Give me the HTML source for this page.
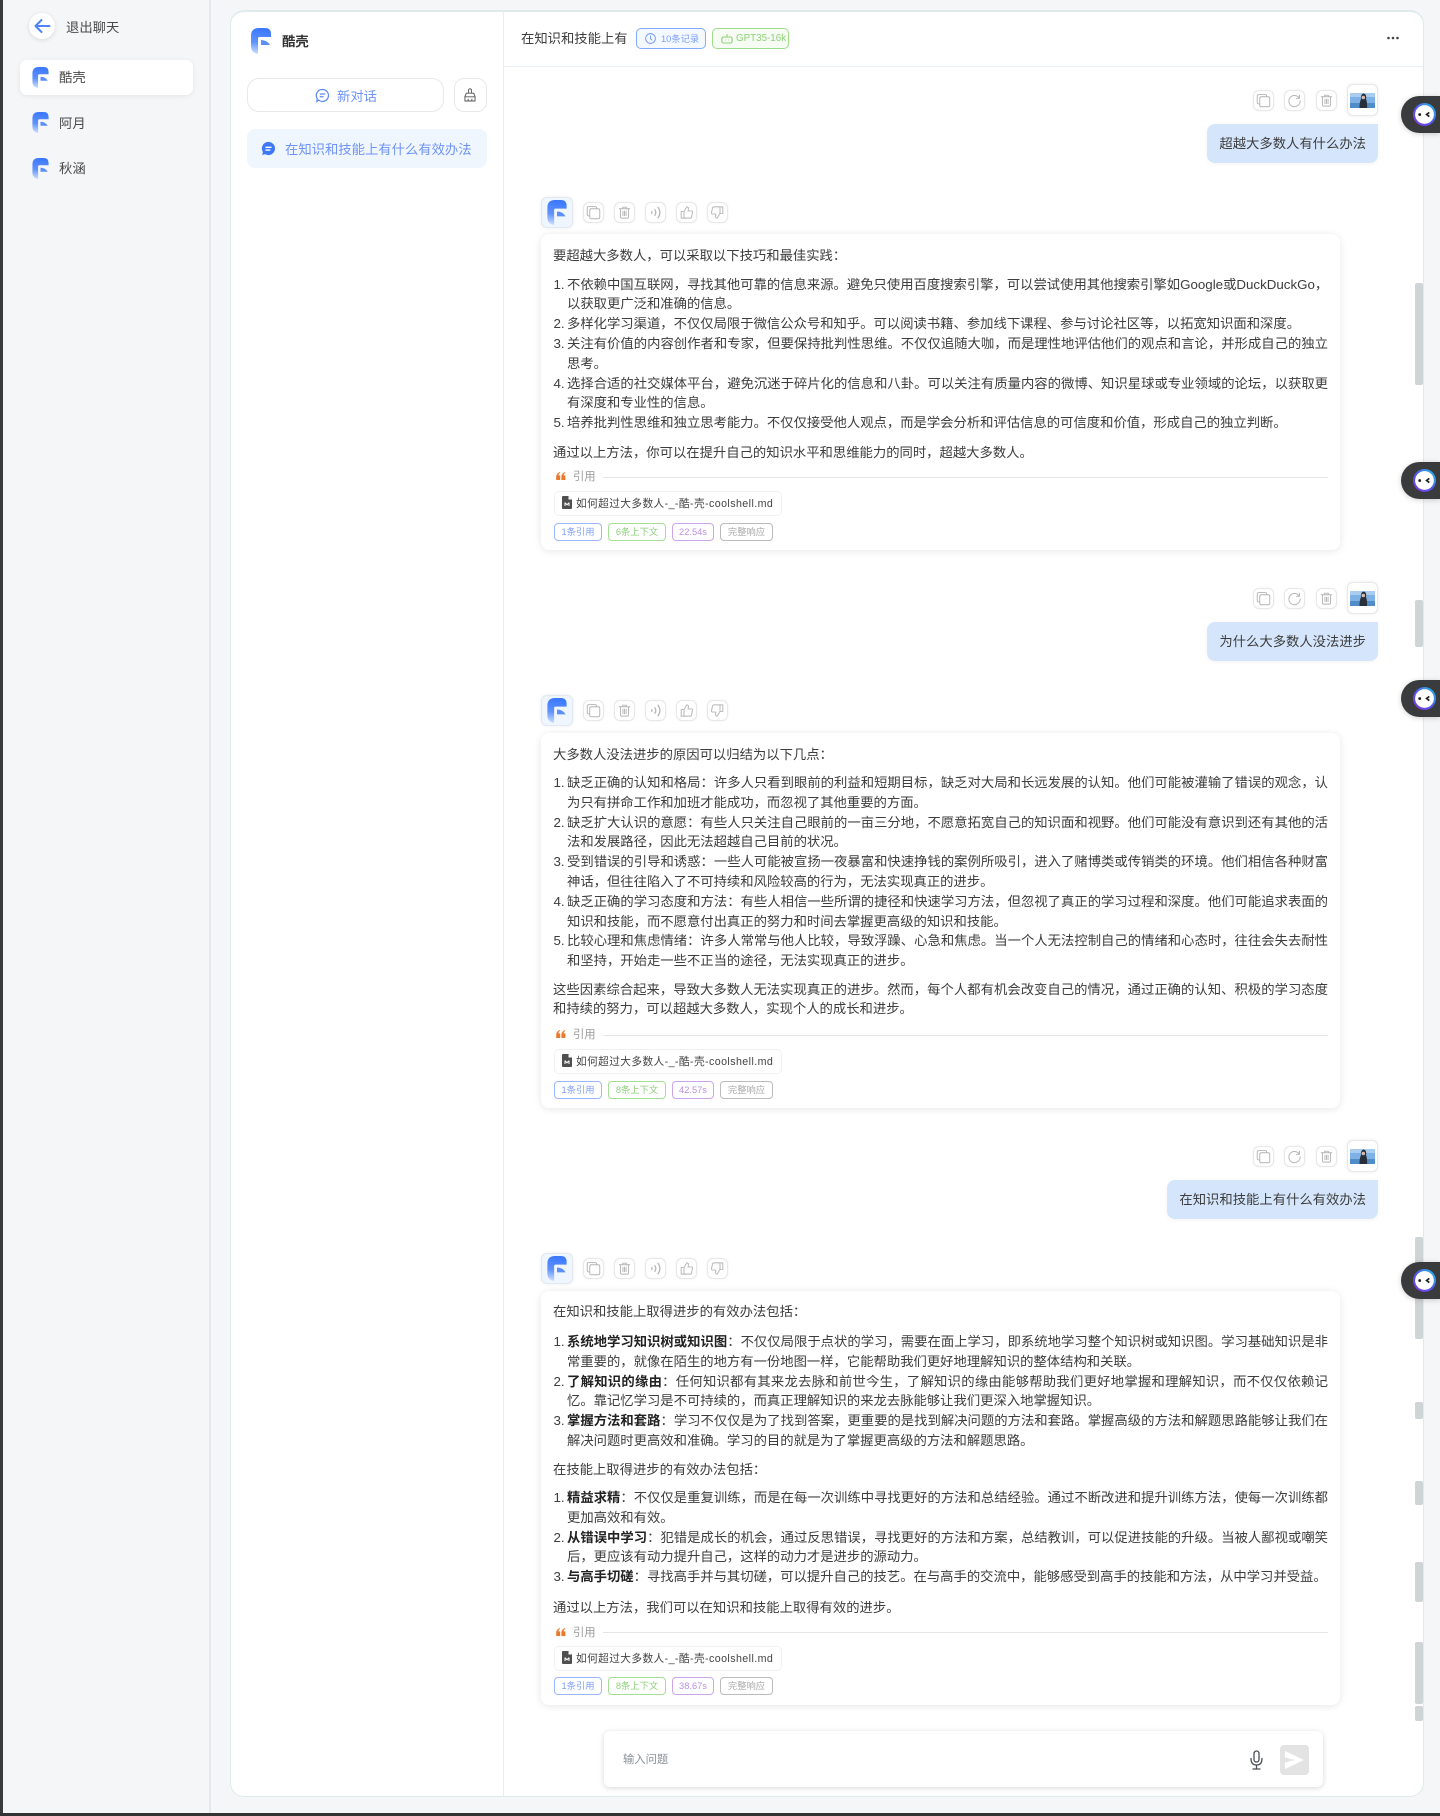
<!DOCTYPE html>
<html lang="zh-CN">
<head>
<meta charset="utf-8">
<title>酷壳</title>
<style>
*{box-sizing:border-box}
html,body{margin:0;padding:0}
body{width:1440px;height:1816px;position:relative;overflow:hidden;background:#f4f6f8;font-family:"Liberation Sans","Noto Sans CJK SC",sans-serif;color:#3c3c3c;font-size:13.33px}
.a{position:absolute}
.t{position:absolute;height:20px;line-height:20px;margin-top:1px;font-size:13.33px;white-space:nowrap;color:#3d3d3d;filter:blur(.25px)}
.p{left:553px;width:775px}
.n{left:567px;width:761px}
.j{text-align-last:justify}
.n i{position:absolute;left:-13.5px;font-style:normal}
b{font-weight:700;color:#222}
.card{position:absolute;left:541px;width:799px;background:#fff;border-radius:8px;box-shadow:0 1px 8px rgba(0,0,0,.10)}
.ib{position:absolute;top:5px;width:21px;height:21px;background:#fff;border:1px solid #e8e8e8;border-radius:6px;box-shadow:0 0 2px rgba(0,0,0,.06);display:flex;align-items:center;justify-content:center}
.ib svg{width:15px;height:15px;fill:none;stroke:#b4b4b4;stroke-width:1.5;stroke-linecap:round;stroke-linejoin:round}
.row{position:absolute;left:0;width:1440px;height:32px}
.bot{position:absolute;left:541px;top:0;width:32px;height:31px;background:#f0f6ff;border:1px solid #e2e9f3;border-radius:6px;box-shadow:0 0 3px rgba(0,0,0,.08);display:flex;align-items:center;justify-content:center}
.ava{position:absolute;left:1347px;top:0;width:31px;height:32px;background:#fff;border:1px solid #e8e8e8;border-radius:6px;box-shadow:0 0 3px rgba(0,0,0,.08)}
.bub{position:absolute;right:62px;height:39px;line-height:40px;padding:0 12px;background:#d5e6fc;border-radius:8px 0 8px 8px;font-size:13.33px;color:#3d3d3d;white-space:nowrap;box-shadow:0 1px 4px rgba(0,0,0,.05)}
.qt{position:absolute;left:573px;font-size:11.3px;line-height:14px;margin-top:1px;color:#999}
.ql{position:absolute;left:603px;width:725px;height:1px;background:#e3e5e8}
.qm{position:absolute;left:556px;width:10px;height:8px;margin-top:1px}
.chip{position:absolute;left:554px;width:228px;height:25px;background:#fff;border:1px solid #f1f1f3;border-radius:5px;font-size:10.67px;letter-spacing:.42px;line-height:25px;padding-left:21px;color:#444;white-space:nowrap;filter:blur(.2px)}
.chip svg{position:absolute;left:7px;top:4px;width:10px;height:13px}
.tag{position:absolute;height:18px;line-height:16px;border:1px solid;border-radius:4px;font-size:9.3px;text-align:center;white-space:nowrap}
.tb{color:#7f9ffa;border-color:#9ab7ff}
.tg{color:#8fd07a;border-color:#a5df93}
.tp{color:#b88fe0;border-color:#cca4ea}
.tn{color:#aaa;border-color:#bbb}
.pill{position:absolute;left:1401px;width:39px;height:37px;background:#3a3b3d;border-radius:18.5px 0 0 18.5px;box-shadow:0 1px 6px rgba(0,0,0,.18);z-index:5}
.pill svg{position:absolute;left:12px;top:7px;width:23px;height:23px}
.sb{position:absolute;left:1415px;width:8px;background:#cfd4d7;border-radius:2px;z-index:3}
.side{position:absolute;left:59px;height:20px;line-height:20px;margin-top:1px;font-size:13.33px;color:#4a4a4a}
</style>
</head>
<body>
<svg width="0" height="0" style="position:absolute">
<defs>
<linearGradient id="lg" x1="0.3" y1="0" x2="0.2" y2="1"><stop offset="0" stop-color="#3b78ff"/><stop offset=".55" stop-color="#5f93fb"/><stop offset="1" stop-color="#cfe0ff"/></linearGradient>
<linearGradient id="rg" x1="0" y1="1" x2="1" y2="0"><stop offset="0" stop-color="#8a2fd8"/><stop offset=".5" stop-color="#4d5cf0"/><stop offset="1" stop-color="#20c7dc"/></linearGradient>
<symbol id="logo" viewBox="0 0 20 26">
<path fill="url(#lg)" d="M8 0H14Q20 0 20 6V9H8.5Q7 9 7 10.5V26Q0 25 0 18V8Q0 0 8 0Z"/>
<path fill="#5c8ffa" d="M10 12Q16 12 19 17H10Z"/>
</symbol>
<symbol id="copy" viewBox="0 0 24 24"><path d="M17 6V5A2.500 2.500 0 0 0 14.500 2.500H4.500A2.500 2.500 0 0 0 2 5V15A2.500 2.500 0 0 0 4.500 17.500H6"/><rect x="6" y="6" width="16" height="16" rx="2.500"/></symbol>
<symbol id="trash" viewBox="0 0 24 24"><path d="M3.500 6H20.500M9 6V3.500H15V6M5.500 6V19A2 2 0 0 0 7.500 21H16.500A2 2 0 0 0 18.500 19V6M9.500 10V17M12 10V17M14.500 10V17"/></symbol>
<symbol id="sound" viewBox="0 0 24 24"><path d="M6 10.500Q7 12 6 13.500M11 7.500Q14 12 11 16.500M16 3.500Q22 12 16 20.500" stroke-width="2"/></symbol>
<symbol id="up" viewBox="0 0 24 24"><path d="M8 10.500L12.500 3Q15.500 3 15 6.500L14.500 9.500H20Q22 9.500 21.500 12L20 19.500Q19.500 21 18 21H8ZM8 10.500H3.500V21H8"/></symbol>
<symbol id="down" viewBox="0 0 24 24"><path d="M16 13.500L11.500 21Q8.500 21 9 17.500L9.500 14.500H4Q2 14.500 2.500 12L4 4.500Q4.500 3 6 3H16ZM16 13.500H20.500V3H16"/></symbol>
<symbol id="redo" viewBox="0 0 24 24"><path d="M19.500 8A9 9 0 1 0 21 12.500M20 3.500V8.500H15"/></symbol>
<symbol id="face" viewBox="0 0 24 24">
<circle cx="12" cy="12" r="12" fill="url(#rg)"/><circle cx="12" cy="12" r="9.800" fill="#fff"/>
<circle cx="7" cy="12" r="1.500" fill="#222"/><path d="M17 9.800L14.200 12L17 14.200" fill="none" stroke="#222" stroke-width="1.800"/>
</symbol>
<symbol id="photo" viewBox="0 0 25 15">
<rect width="25" height="15" fill="#7fb2e4"/><rect x="0" y="0" width="25" height="4" fill="#a9cdee"/><rect y="10" width="25" height="5" fill="#4f8cc8"/>
<path d="M9.500 15Q9.500 9 11 6Q10.500 1 13.500 0.500Q17 1 16 6Q17.500 10 17 15Z" fill="#2a2e38"/><circle cx="13.300" cy="4.500" r="1.800" fill="#d8b8a8"/>
</symbol>
<symbol id="file" viewBox="0 0 10 13"><path fill="#4f4f4f" d="M1 0H6.500L10 3.500V12A1 1 0 0 1 9 13H1A1 1 0 0 1 0 12V1A1 1 0 0 1 1 0Z"/><path fill="#fff" d="M6.500 0V3.500H10Z"/><path fill="#fff" d="M2.500 10V6.500H3.500L5 8L6.500 6.500H7.500V10H6.500V8L5 9.500L3.500 8V10Z"/></symbol>
<symbol id="quote" viewBox="0 0 12 10"><path fill="#e97a2b" d="M0 10V6Q0 2 4.500 0L5 1Q3 2 2.800 4.200H5V10ZM6.500 10V6Q6.500 2 11 0L11.500 1Q9.500 2 9.300 4.200H11.500V10Z"/></symbol>
</defs>
</svg>

<!-- screen edges -->
<div class="a" style="left:0;top:0;width:3px;height:1816px;background:#3a3a3a"></div>
<div class="a" style="left:0;top:1813px;width:1440px;height:3px;background:#333"></div>
<div class="a" style="left:209px;top:0;width:2px;height:1813px;background:#e6e9ec"></div>

<!-- sidebar -->
<div class="a" style="left:29px;top:13px;width:26px;height:26px;border-radius:50%;background:#fff;box-shadow:0 1px 5px rgba(0,0,0,.12)"></div>
<svg class="a" style="left:34px;top:18px;width:17px;height:16px" viewBox="0 0 17 16" fill="none" stroke="#4e83fd" stroke-width="2" stroke-linecap="round" stroke-linejoin="round"><path d="M1.500 8H15.500M7.500 2L1.500 8L7.500 14"/></svg>
<div class="side" style="left:66px;top:17px">退出聊天</div>
<div class="a" style="left:20px;top:60px;width:173px;height:35px;background:#fff;border-radius:7px;box-shadow:0 1px 6px rgba(0,0,0,.07)"></div>
<svg class="a" style="left:32px;top:67px;width:17px;height:21px"><use href="#logo"/></svg>
<div class="side" style="top:67px">酷壳</div>
<svg class="a" style="left:32px;top:112px;width:17px;height:21px"><use href="#logo"/></svg>
<div class="side" style="top:113px">阿月</div>
<svg class="a" style="left:32px;top:158px;width:17px;height:21px"><use href="#logo"/></svg>
<div class="side" style="top:158px">秋涵</div>

<!-- main card -->
<div class="a" style="left:230px;top:10px;width:1194px;height:1787px;background:#fff;border:1px solid #dfeaed;border-top-width:2px;border-radius:14px"></div>
<div class="a" style="left:503px;top:11px;width:1px;height:1785px;background:#e9eef3"></div>
<div class="a" style="left:504px;top:66px;width:919px;height:1px;background:#e9eff7"></div>

<!-- left panel -->
<svg class="a" style="left:251px;top:28px;width:20px;height:26px"><use href="#logo"/></svg>
<div class="t" style="left:282px;top:31px;font-weight:700;color:#333">酷壳</div>
<div class="a" style="left:247px;top:78px;width:197px;height:34px;border:1px solid #e9e9ec;border-radius:12px"></div>
<svg class="a" style="left:315px;top:88px;width:15px;height:15px" viewBox="0 0 24 24" fill="none" stroke="#5d8af7" stroke-width="2" stroke-linecap="round"><path d="M12 2.500A9.500 9.500 0 1 1 6 19.300L3 21.500L3.500 17A9.500 9.500 0 0 1 12 2.500Z"/><path d="M8.500 9.500H15.500M8.500 14H13"/></svg>
<div class="t" style="left:337px;top:86px;color:#6f93f7">新对话</div>
<div class="a" style="left:454px;top:78px;width:33px;height:34px;border:1px solid #e9e9ec;border-radius:10px"></div>
<svg class="a" style="left:464px;top:88px;width:12px;height:14px" viewBox="0 0 13 15" fill="none" stroke="#555" stroke-width="1" stroke-linejoin="round"><path d="M5 5.500V1.500Q6.500 0 8 1.500V5.500M2.500 5.500H10.500L12 9V14H1V9ZM1 9.500H12M4.500 14V11.500M8.500 14V11.500"/></svg>
<div class="a" style="left:247px;top:129px;width:240px;height:39px;background:#f0f6fe;border-radius:8px"></div>
<svg class="a" style="left:261px;top:141px;width:15px;height:15px" viewBox="0 0 24 24"><path fill="#3f78f6" d="M12 1.500A10.500 10.500 0 1 1 6.500 21L2 22.500L3 17.500A10.500 10.500 0 0 1 12 1.500Z"/><path stroke="#fff" stroke-width="2.200" stroke-linecap="round" d="M8 10H16M8 14.500H14"/></svg>
<div class="t" style="left:285px;top:139px;color:#6f93f7">在知识和技能上有什么有效办法</div>

<!-- header -->
<div class="t" style="left:521px;top:28px">在知识和技能上有</div>
<div class="a" style="left:636px;top:28px;width:70px;height:21px;background:#f4f8ff;border:1px solid #84a9fd;border-radius:5px"></div>
<svg class="a" style="left:645px;top:33px;width:11px;height:11px" viewBox="0 0 12 12" fill="none" stroke="#6f97f8" stroke-width="1"><circle cx="6" cy="6" r="5.300"/><path d="M6 2.800V6.300L8 8"/></svg>
<div class="t" style="left:661px;top:28px;font-size:9.300px;color:#7f9ffa">10条记录</div>
<div class="a" style="left:712px;top:28px;width:77px;height:21px;background:#f6fcf3;border:1px solid #9edc89;border-radius:5px"></div>
<svg class="a" style="left:721px;top:33px;width:12px;height:11px" viewBox="0 0 12 11" fill="none" stroke="#8fd07a" stroke-width="1"><rect x="1" y="4" width="10" height="6" rx="1.500"/><path d="M6 4V1M0 7H1M11 7H12M4 7H4.500M7.500 7H8"/></svg>
<div class="t" style="left:736px;top:28px;font-size:9.800px;color:#8fd07a">GPT35-16k</div>
<svg class="a" style="left:1387px;top:36px;width:12px;height:4px" viewBox="0 0 12 4" fill="#444"><circle cx="1.500" cy="2" r="1.300"/><circle cx="6" cy="2" r="1.300"/><circle cx="10.500" cy="2" r="1.300"/></svg>

<!-- user 1 -->
<div class="row" style="top:84px">
<div class="ib" style="left:1253px;top:6px"><svg><use href="#copy"/></svg></div>
<div class="ib" style="left:1284px;top:6px"><svg><use href="#redo"/></svg></div>
<div class="ib" style="left:1316px;top:6px"><svg><use href="#trash"/></svg></div>
<div class="ava"><svg style="position:absolute;left:2px;top:8px;width:25px;height:15px"><use href="#photo"/></svg></div>
</div>
<div class="bub" style="top:124px">超越大多数人有什么办法</div>

<!-- bot 1 -->
<div class="row" style="top:197px">
<div class="bot"><svg width="20" height="25"><use href="#logo"/></svg></div>
<div class="ib" style="left:583px"><svg><use href="#copy"/></svg></div>
<div class="ib" style="left:614px"><svg><use href="#trash"/></svg></div>
<div class="ib" style="left:645px"><svg><use href="#sound"/></svg></div>
<div class="ib" style="left:676px"><svg><use href="#up"/></svg></div>
<div class="ib" style="left:707px"><svg><use href="#down"/></svg></div>
</div>
<div class="card" style="top:234px;height:316px"></div>
<div class="t p" style="top:244.500px">要超越大多数人，可以采取以下技巧和最佳实践：</div>
<div class="t n j" style="top:273.500px"><i>1.</i>不依赖中国互联网，寻找其他可靠的信息来源。避免只使用百度搜索引擎，可以尝试使用其他搜索引擎如Google或DuckDuckGo，</div>
<div class="t n" style="top:293.300px">以获取更广泛和准确的信息。</div>
<div class="t n" style="top:313.100px"><i>2.</i>多样化学习渠道，不仅仅局限于微信公众号和知乎。可以阅读书籍、参加线下课程、参与讨论社区等，以拓宽知识面和深度。</div>
<div class="t n j" style="top:332.900px"><i>3.</i>关注有价值的内容创作者和专家，但要保持批判性思维。不仅仅追随大咖，而是理性地评估他们的观点和言论，并形成自己的独立</div>
<div class="t n" style="top:352.700px">思考。</div>
<div class="t n j" style="top:372.500px"><i>4.</i>选择合适的社交媒体平台，避免沉迷于碎片化的信息和八卦。可以关注有质量内容的微博、知识星球或专业领域的论坛，以获取更</div>
<div class="t n" style="top:392.300px">有深度和专业性的信息。</div>
<div class="t n" style="top:412.100px"><i>5.</i>培养批判性思维和独立思考能力。不仅仅接受他人观点，而是学会分析和评估信息的可信度和价值，形成自己的独立判断。</div>
<div class="t p" style="top:441.500px">通过以上方法，你可以在提升自己的知识水平和思维能力的同时，超越大多数人。</div>
<svg class="qm" style="top:471px"><use href="#quote"/></svg>
<div class="qt" style="top:469px">引用</div>
<div class="ql" style="top:477px"></div>
<div class="chip" style="top:491px"><svg><use href="#file"/></svg>如何超过大多数人-_-酷-壳-coolshell.md</div>
<div class="tag tb" style="left:554px;top:523px;width:48px">1条引用</div>
<div class="tag tg" style="left:608px;top:523px;width:58px">6条上下文</div>
<div class="tag tp" style="left:672px;top:523px;width:42px">22.54s</div>
<div class="tag tn" style="left:720px;top:523px;width:53px">完整响应</div>

<!-- user 2 -->
<div class="row" style="top:582px">
<div class="ib" style="left:1253px;top:6px"><svg><use href="#copy"/></svg></div>
<div class="ib" style="left:1284px;top:6px"><svg><use href="#redo"/></svg></div>
<div class="ib" style="left:1316px;top:6px"><svg><use href="#trash"/></svg></div>
<div class="ava"><svg style="position:absolute;left:2px;top:8px;width:25px;height:15px"><use href="#photo"/></svg></div>
</div>
<div class="bub" style="top:622px">为什么大多数人没法进步</div>

<!-- bot 2 -->
<div class="row" style="top:695px">
<div class="bot"><svg width="20" height="25"><use href="#logo"/></svg></div>
<div class="ib" style="left:583px"><svg><use href="#copy"/></svg></div>
<div class="ib" style="left:614px"><svg><use href="#trash"/></svg></div>
<div class="ib" style="left:645px"><svg><use href="#sound"/></svg></div>
<div class="ib" style="left:676px"><svg><use href="#up"/></svg></div>
<div class="ib" style="left:707px"><svg><use href="#down"/></svg></div>
</div>
<div class="card" style="top:733px;height:375px"></div>
<div class="t p" style="top:744px">大多数人没法进步的原因可以归结为以下几点：</div>
<div class="t n j" style="top:772px"><i>1.</i>缺乏正确的认知和格局：许多人只看到眼前的利益和短期目标，缺乏对大局和长远发展的认知。他们可能被灌输了错误的观念，认</div>
<div class="t n" style="top:791.800px">为只有拼命工作和加班才能成功，而忽视了其他重要的方面。</div>
<div class="t n j" style="top:811.600px"><i>2.</i>缺乏扩大认识的意愿：有些人只关注自己眼前的一亩三分地，不愿意拓宽自己的知识面和视野。他们可能没有意识到还有其他的活</div>
<div class="t n" style="top:831.400px">法和发展路径，因此无法超越自己目前的状况。</div>
<div class="t n j" style="top:851.200px"><i>3.</i>受到错误的引导和诱惑：一些人可能被宣扬一夜暴富和快速挣钱的案例所吸引，进入了赌博类或传销类的环境。他们相信各种财富</div>
<div class="t n" style="top:871px">神话，但往往陷入了不可持续和风险较高的行为，无法实现真正的进步。</div>
<div class="t n j" style="top:890.800px"><i>4.</i>缺乏正确的学习态度和方法：有些人相信一些所谓的捷径和快速学习方法，但忽视了真正的学习过程和深度。他们可能追求表面的</div>
<div class="t n" style="top:910.600px">知识和技能，而不愿意付出真正的努力和时间去掌握更高级的知识和技能。</div>
<div class="t n j" style="top:930.400px"><i>5.</i>比较心理和焦虑情绪：许多人常常与他人比较，导致浮躁、心急和焦虑。当一个人无法控制自己的情绪和心态时，往往会失去耐性</div>
<div class="t n" style="top:950.200px">和坚持，开始走一些不正当的途径，无法实现真正的进步。</div>
<div class="t p j" style="top:978.500px">这些因素综合起来，导致大多数人无法实现真正的进步。然而，每个人都有机会改变自己的情况，通过正确的认知、积极的学习态度</div>
<div class="t p" style="top:998.300px">和持续的努力，可以超越大多数人，实现个人的成长和进步。</div>
<svg class="qm" style="top:1029px"><use href="#quote"/></svg>
<div class="qt" style="top:1027px">引用</div>
<div class="ql" style="top:1035px"></div>
<div class="chip" style="top:1049px"><svg><use href="#file"/></svg>如何超过大多数人-_-酷-壳-coolshell.md</div>
<div class="tag tb" style="left:554px;top:1081px;width:48px">1条引用</div>
<div class="tag tg" style="left:608px;top:1081px;width:58px">8条上下文</div>
<div class="tag tp" style="left:672px;top:1081px;width:42px">42.57s</div>
<div class="tag tn" style="left:720px;top:1081px;width:53px">完整响应</div>

<!-- user 3 -->
<div class="row" style="top:1140px">
<div class="ib" style="left:1253px;top:6px"><svg><use href="#copy"/></svg></div>
<div class="ib" style="left:1284px;top:6px"><svg><use href="#redo"/></svg></div>
<div class="ib" style="left:1316px;top:6px"><svg><use href="#trash"/></svg></div>
<div class="ava"><svg style="position:absolute;left:2px;top:8px;width:25px;height:15px"><use href="#photo"/></svg></div>
</div>
<div class="bub" style="top:1180px">在知识和技能上有什么有效办法</div>

<!-- bot 3 -->
<div class="row" style="top:1253px">
<div class="bot"><svg width="20" height="25"><use href="#logo"/></svg></div>
<div class="ib" style="left:583px"><svg><use href="#copy"/></svg></div>
<div class="ib" style="left:614px"><svg><use href="#trash"/></svg></div>
<div class="ib" style="left:645px"><svg><use href="#sound"/></svg></div>
<div class="ib" style="left:676px"><svg><use href="#up"/></svg></div>
<div class="ib" style="left:707px"><svg><use href="#down"/></svg></div>
</div>
<div class="card" style="top:1291px;height:414px"></div>
<div class="t p" style="top:1301px">在知识和技能上取得进步的有效办法包括：</div>
<div class="t n j" style="top:1331px"><i>1.</i><b>系统地学习知识树或知识图</b>：不仅仅局限于点状的学习，需要在面上学习，即系统地学习整个知识树或知识图。学习基础知识是非</div>
<div class="t n" style="top:1350.800px">常重要的，就像在陌生的地方有一份地图一样，它能帮助我们更好地理解知识的整体结构和关联。</div>
<div class="t n j" style="top:1370.600px"><i>2.</i><b>了解知识的缘由</b>：任何知识都有其来龙去脉和前世今生，了解知识的缘由能够帮助我们更好地掌握和理解知识，而不仅仅依赖记</div>
<div class="t n" style="top:1390.400px">忆。靠记忆学习是不可持续的，而真正理解知识的来龙去脉能够让我们更深入地掌握知识。</div>
<div class="t n j" style="top:1410.200px"><i>3.</i><b>掌握方法和套路</b>：学习不仅仅是为了找到答案，更重要的是找到解决问题的方法和套路。掌握高级的方法和解题思路能够让我们在</div>
<div class="t n" style="top:1430px">解决问题时更高效和准确。学习的目的就是为了掌握更高级的方法和解题思路。</div>
<div class="t p" style="top:1459px">在技能上取得进步的有效办法包括：</div>
<div class="t n j" style="top:1487px"><i>1.</i><b>精益求精</b>：不仅仅是重复训练，而是在每一次训练中寻找更好的方法和总结经验。通过不断改进和提升训练方法，使每一次训练都</div>
<div class="t n" style="top:1506.800px">更加高效和有效。</div>
<div class="t n j" style="top:1526.600px"><i>2.</i><b>从错误中学习</b>：犯错是成长的机会，通过反思错误，寻找更好的方法和方案，总结教训，可以促进技能的升级。当被人鄙视或嘲笑</div>
<div class="t n" style="top:1546.400px">后，更应该有动力提升自己，这样的动力才是进步的源动力。</div>
<div class="t n" style="top:1566.200px"><i>3.</i><b>与高手切磋</b>：寻找高手并与其切磋，可以提升自己的技艺。在与高手的交流中，能够感受到高手的技能和方法，从中学习并受益。</div>
<div class="t p" style="top:1597px">通过以上方法，我们可以在知识和技能上取得有效的进步。</div>
<svg class="qm" style="top:1627px"><use href="#quote"/></svg>
<div class="qt" style="top:1625px">引用</div>
<div class="ql" style="top:1632px"></div>
<div class="chip" style="top:1646px"><svg><use href="#file"/></svg>如何超过大多数人-_-酷-壳-coolshell.md</div>
<div class="tag tb" style="left:554px;top:1677px;width:48px">1条引用</div>
<div class="tag tg" style="left:608px;top:1677px;width:58px">8条上下文</div>
<div class="tag tp" style="left:672px;top:1677px;width:42px">38.67s</div>
<div class="tag tn" style="left:720px;top:1677px;width:53px">完整响应</div>

<!-- input -->
<div class="a" style="left:604px;top:1731px;width:719px;height:56px;background:#fff;border-radius:6px;box-shadow:0 1px 6px rgba(0,0,0,.16);z-index:2"></div>
<div class="t" style="left:623px;top:1749px;font-size:11.300px;color:#8a9199;z-index:2">输入问题</div>
<svg class="a" style="left:1250px;top:1750px;width:13px;height:20px;z-index:2" viewBox="0 0 13 20" fill="none" stroke="#4a4f55" stroke-width="1.300" stroke-linecap="round"><rect x="4" y="1" width="5" height="11" rx="2.500"/><path d="M1 8.500Q1 15 6.500 15Q12 15 12 8.500M6.500 15V19M3 19H10"/></svg>
<div class="a" style="left:1280px;top:1745px;width:29px;height:30px;background:#e3e3e3;border-radius:4px;z-index:2"></div>
<svg class="a" style="left:1284px;top:1750px;width:21px;height:20px;z-index:2" viewBox="0 0 21 20"><path fill="#fff" d="M1 1L20 10L1 19V12.500L11 10L1 7.500Z"/></svg>

<!-- scrollbar fragments -->
<div class="sb" style="top:283px;height:102px"></div>
<div class="sb" style="top:600px;height:47px"></div>
<div class="sb" style="top:1237px;height:102px"></div>
<div class="sb" style="top:1402px;height:17px"></div>
<div class="sb" style="top:1481px;height:24px"></div>
<div class="sb" style="top:1562px;height:40px"></div>
<div class="sb" style="top:1642px;height:62px"></div>
<div class="sb" style="top:1706px;height:15px"></div>

<!-- floating pills -->
<div class="pill" style="top:96px"><svg><use href="#face"/></svg></div>
<div class="pill" style="top:462px"><svg><use href="#face"/></svg></div>
<div class="pill" style="top:680px"><svg><use href="#face"/></svg></div>
<div class="pill" style="top:1262px"><svg><use href="#face"/></svg></div>
</body>
</html>
